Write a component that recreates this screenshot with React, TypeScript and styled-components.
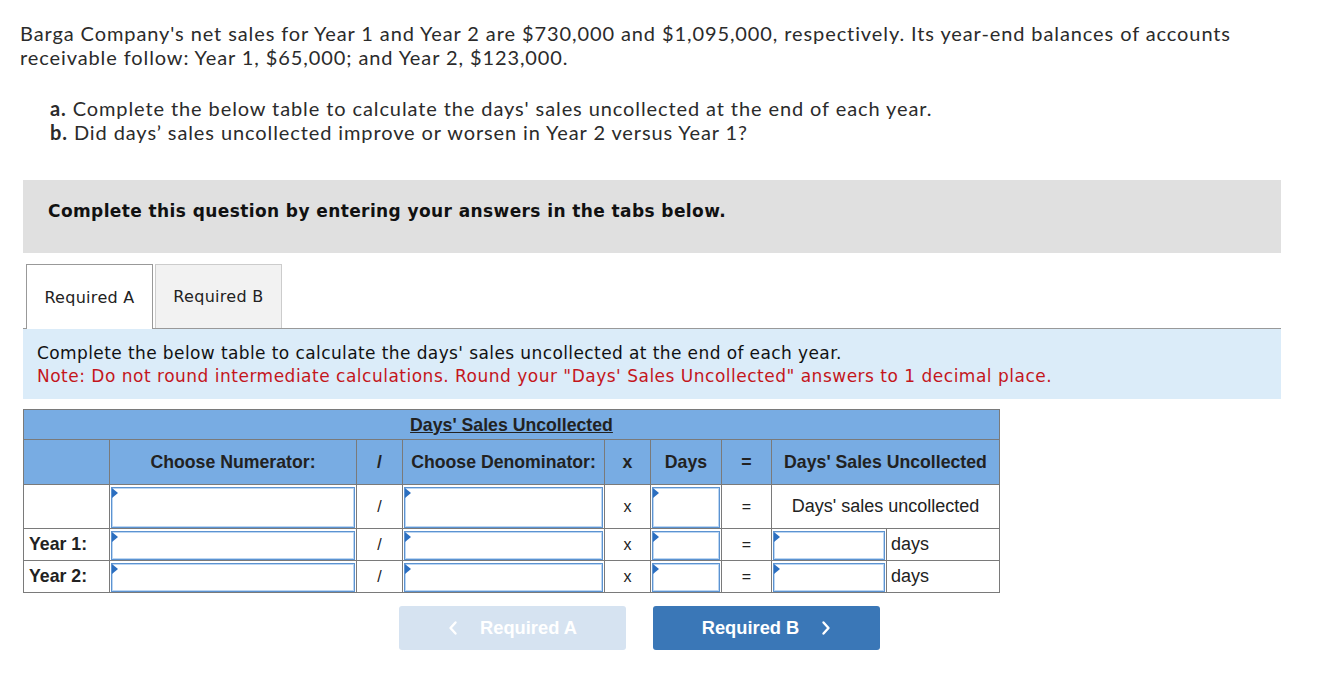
import styled, { createGlobalStyle } from 'styled-components';

const GlobalStyle = createGlobalStyle`
  body {
    margin: 0;
    background: #fff;
    color: #222;
  }
`;

const Page = styled.div`
  padding: 21px 0 40px 20px;
  width: 1261px;
`;

const Question = styled.p`
  margin: 0;
  font-family: Lato, 'Open Sans', sans-serif;
  font-size: 20px;
  letter-spacing: 0.9px;
  line-height: 24px;
  color: #2b2b2b;
`;

const Parts = styled.ol`
  list-style: none;
  margin: 27px 0 0 30px;
  padding: 0;
  font-family: Lato, 'Open Sans', sans-serif;
  font-size: 20px;
  letter-spacing: 0.9px;
  line-height: 24px;
  color: #2b2b2b;
  b {
    font-weight: 700;
  }
`;

const Instruction = styled.div`
  margin: 36px 0 0 3px;
  height: 73px;
  box-sizing: border-box;
  padding: 22px 25px 0;
  background: #e0e0e0;
  font-family: 'DejaVu Sans', Verdana, sans-serif;
  font-weight: 700;
  font-size: 17px;
  letter-spacing: 0.4px;
  line-height: 18px;
  color: #111;
`;

const TabBar = styled.div`
  display: flex;
  gap: 2px;
  margin: 11px 0 0 3px;
  padding-left: 3px;
  border-bottom: 1px solid #999;
`;

const Tab = styled.div<{ $active?: boolean }>`
  width: 127px;
  box-sizing: border-box;
  display: flex;
  align-items: center;
  justify-content: center;
  font-family: 'DejaVu Sans', Verdana, sans-serif;
  font-size: 16px;
  letter-spacing: 0.3px;
  color: #222;
  background: ${(p) => (p.$active ? '#fff' : '#f2f2f2')};
  border: 1px solid ${(p) => (p.$active ? '#999' : '#ccc')};
  border-bottom: none;
  margin-bottom: ${(p) => (p.$active ? '-1px' : '0')};
  height: ${(p) => (p.$active ? '65px' : '64px')};
`;

const InfoBox = styled.div`
  margin-left: 3px;
  height: 70px;
  box-sizing: border-box;
  padding: 13px 14px 0;
  background: #dbecf9;
  font-family: 'DejaVu Sans', Verdana, sans-serif;
  font-size: 17px;
  letter-spacing: 0.4px;
  line-height: 23px;
  color: #111;
`;

const Note = styled.div`
  color: #c4161c;
  letter-spacing: 0.5px;
`;

const Table = styled.table`
  margin: 10px 0 0 3px;
  border-collapse: collapse;
  font-family: 'Liberation Sans', Arial, sans-serif;
  font-size: 17.7px;
  color: #222;
  td,
  th {
    border: 1px solid #7a7a7a;
    padding: 0;
  }
`;

const HeadCell = styled.th<{ $w?: number }>`
  background: #78ace3;
  font-weight: 700;
  text-align: center;
  height: 45px;
  width: ${(p) => (p.$w ? `${p.$w}px` : 'auto')};
  box-sizing: border-box;
`;

const TitleCell = styled.th`
  background: #78ace3;
  height: 29px;
  line-height: 20px;
  font-weight: 700;
  text-decoration: underline;
  text-align: center;
`;

const Label = styled.td`
  font-weight: 700;
  padding-left: 5px !important;
  text-align: left;
`;

const Op = styled.td`
  text-align: center;
  font-size: 16px;
`;

const Plain = styled.td<{ $left?: boolean }>`
  text-align: ${(p) => (p.$left ? 'left' : 'center')};
  font-size: 18px;
  padding-left: ${(p) => (p.$left ? '4px' : '0')} !important;
`;

const InputCell = styled.td<{ $h: number; $noRight?: boolean }>`
  height: ${(p) => p.$h}px;
  ${(p) => (p.$noRight ? 'border-right: none !important;' : '')}
`;

const Field = styled.div<{ $h: number }>`
  position: relative;
  height: ${(p) => p.$h}px;
  margin: 1px 1px 0;
  box-sizing: border-box;
  background: #fff;
  border: 1px solid #5c93d1;
  box-shadow: inset 0 0 0 1px #bcd6f2;
  &::before {
    content: '';
    position: absolute;
    left: 0;
    top: 0;
    border-top: 5px solid transparent;
    border-bottom: 5px solid transparent;
    border-left: 6px solid #2c6fc0;
  }
`;

const ButtonRow = styled.div`
  display: flex;
  gap: 27px;
  margin: 13px 0 0 379px;
`;

const NavButton = styled.button<{ $disabled?: boolean }>`
  width: 227px;
  height: 44px;
  border: none;
  border-radius: 3px;
  display: flex;
  align-items: center;
  justify-content: center;
  gap: 22px;
  font-family: 'Liberation Sans', Arial, sans-serif;
  font-weight: 700;
  font-size: 18.3px;
  color: #fff;
  background: ${(p) => (p.$disabled ? '#d6e3f1' : '#3a77b7')};
  cursor: ${(p) => (p.$disabled ? 'default' : 'pointer')};
  svg {
    width: 10px;
    height: 16px;
  }
`;

const Chevron = ({ dir }: { dir: 'left' | 'right' }) => (
  <svg viewBox="0 0 10 16" fill="none" stroke="#fff" strokeWidth="2.4" strokeLinecap="round" strokeLinejoin="round">
    {dir === 'left' ? <path d="M7.5 2.5 2.5 8l5 5.5" /> : <path d="M2.5 2.5 7.5 8l-5 5.5" />}
  </svg>
);

const rows = [
  { label: '', h: 43 },
  { label: 'Year 1:', h: 31 },
  { label: 'Year 2:', h: 31 },
];

export default function App() {
  return (
    <>
      <GlobalStyle />
      <Page>
        <Question>
          Barga Company's net sales for Year 1 and Year 2 are $730,000 and $1,095,000, respectively. Its year-end
          balances of accounts receivable follow: Year 1, $65,000; and Year 2, $123,000.
        </Question>
        <Parts>
          <li>
            <b>a.</b> Complete the below table to calculate the days' sales uncollected at the end of each year.
          </li>
          <li>
            <b>b.</b> Did days’ sales uncollected improve or worsen in Year 2 versus Year 1?
          </li>
        </Parts>
        <Instruction>Complete this question by entering your answers in the tabs below.</Instruction>
        <TabBar>
          <Tab $active>Required A</Tab>
          <Tab>Required B</Tab>
        </TabBar>
        <InfoBox>
          Complete the below table to calculate the days' sales uncollected at the end of each year.
          <Note>Note: Do not round intermediate calculations. Round your "Days' Sales Uncollected" answers to 1 decimal place.</Note>
        </InfoBox>
        <Table>
          <thead>
            <tr>
              <TitleCell colSpan={9}>Days' Sales Uncollected</TitleCell>
            </tr>
            <tr>
              <HeadCell $w={86} />
              <HeadCell $w={247}>Choose Numerator:</HeadCell>
              <HeadCell $w={46}>/</HeadCell>
              <HeadCell $w={202}>Choose Denominator:</HeadCell>
              <HeadCell $w={46}>x</HeadCell>
              <HeadCell $w={71}>Days</HeadCell>
              <HeadCell $w={50}>=</HeadCell>
              <HeadCell colSpan={2} $w={228}>
                Days' Sales Uncollected
              </HeadCell>
            </tr>
          </thead>
          <tbody>
            {rows.map((r, i) => (
              <tr key={i}>
                <Label>{r.label}</Label>
                <InputCell $h={r.h}>
                  <Field $h={r.h - 2} />
                </InputCell>
                <Op>/</Op>
                <InputCell $h={r.h}>
                  <Field $h={r.h - 2} />
                </InputCell>
                <Op>x</Op>
                <InputCell $h={r.h}>
                  <Field $h={r.h - 2} />
                </InputCell>
                <Op>=</Op>
                {i === 0 ? (
                  <Plain colSpan={2}>Days' sales uncollected</Plain>
                ) : (
                  <>
                    <InputCell $h={r.h} $noRight style={{ width: 114 }}>
                      <Field $h={r.h - 2} />
                    </InputCell>
                    <Plain $left>days</Plain>
                  </>
                )}
              </tr>
            ))}
          </tbody>
        </Table>
        <ButtonRow>
          <NavButton $disabled>
            <Chevron dir="left" />
            Required A
          </NavButton>
          <NavButton>
            Required B
            <Chevron dir="right" />
          </NavButton>
        </ButtonRow>
      </Page>
    </>
  );
}
